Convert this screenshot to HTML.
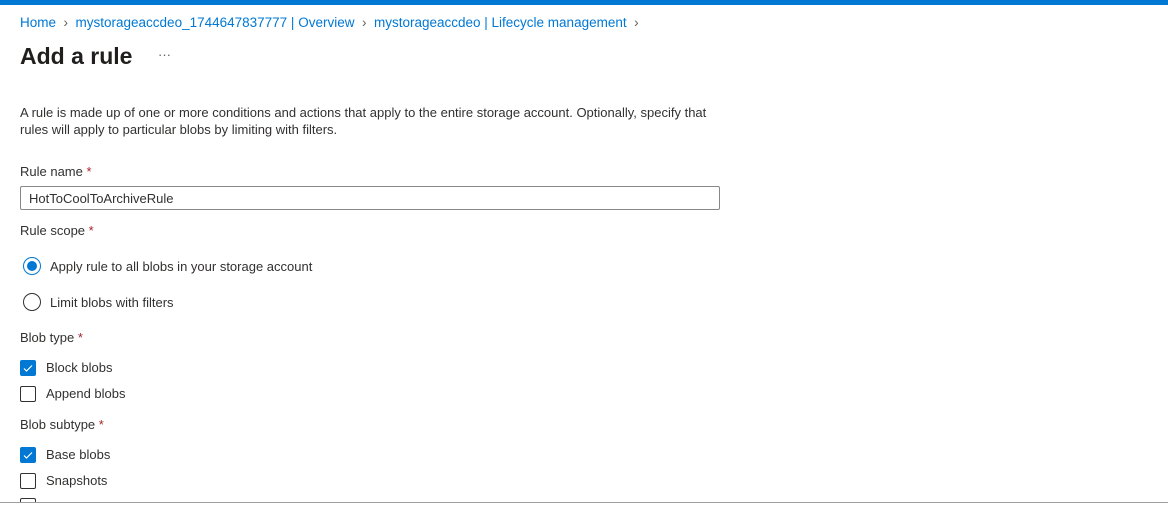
<!DOCTYPE html>
<html><head><style>
body{margin:0;width:1168px;height:522px;background:#fff;font-family:"Liberation Sans",sans-serif;color:#323130;position:relative;overflow:hidden;font-size:13px}
.a{position:absolute;white-space:nowrap}
.bc{color:#0078d4;font-size:13.5px}
.sep{color:#605e5c}
.req{color:#a4262c}
.cb{position:absolute;left:20px;width:16px;height:16px;border:1px solid #323130;border-radius:2px;box-sizing:border-box}
.cb.on{background:#0078d4;border-color:#0078d4}
.rd{position:absolute;left:23px;width:18px;height:18px;border:1px solid #323130;border-radius:50%;box-sizing:border-box}
</style></head><body>
<div class="a" style="left:0;top:0;width:1168px;height:5px;background:#0078d4"></div>
<div class="a bc" style="left:20px;top:15px">Home <span class="sep">&nbsp;›&nbsp;</span> mystorageaccdeo_1744647837777 | Overview <span class="sep">&nbsp;›&nbsp;</span> mystorageaccdeo | Lifecycle management <span class="sep">&nbsp;›</span></div>
<div class="a" style="left:20px;top:43px;font-size:23px;font-weight:bold;color:#201f1e">Add a rule</div>
<div class="a" style="left:158px;top:47px;font-size:13px;color:#605e5c">···</div>
<div class="a" style="left:20px;top:104px;line-height:17px">A rule is made up of one or more conditions and actions that apply to the entire storage account. Optionally, specify that<br>rules will apply to particular blobs by limiting with filters.</div>
<div class="a" style="left:20px;top:164px">Rule name <span class="req">*</span></div>
<div class="a" style="left:20px;top:186px;width:700px;height:24px;border:1px solid #8a8886;border-radius:2px;box-sizing:border-box;padding:4px 8px">HotToCoolToArchiveRule</div>
<div class="a" style="left:20px;top:223px">Rule scope <span class="req">*</span></div>
<div class="rd" style="top:257px;border-color:#0078d4"><div style="position:absolute;left:3px;top:3px;width:10px;height:10px;border-radius:50%;background:#0078d4"></div></div>
<div class="a" style="left:50px;top:259px">Apply rule to all blobs in your storage account</div>
<div class="rd" style="top:293px"></div>
<div class="a" style="left:50px;top:295px">Limit blobs with filters</div>
<div class="a" style="left:20px;top:330px">Blob type <span class="req">*</span></div>
<div class="cb on" style="top:360px"><svg width="16" height="16" style="position:absolute;left:-1px;top:-1px"><path d="M4 8.5l2.5 2.5L12 5.5" stroke="#fff" fill="none" stroke-width="1.2"/></svg></div>
<div class="a" style="left:46px;top:360px">Block blobs</div>
<div class="cb" style="top:386px"></div>
<div class="a" style="left:46px;top:386px">Append blobs</div>
<div class="a" style="left:20px;top:417px">Blob subtype <span class="req">*</span></div>
<div class="cb on" style="top:447px"><svg width="16" height="16" style="position:absolute;left:-1px;top:-1px"><path d="M4 8.5l2.5 2.5L12 5.5" stroke="#fff" fill="none" stroke-width="1.2"/></svg></div>
<div class="a" style="left:46px;top:447px">Base blobs</div>
<div class="cb" style="top:473px"></div>
<div class="a" style="left:46px;top:473px">Snapshots</div>
<div class="a" style="left:20px;top:498px;width:16px;height:4px;border:1px solid #323130;border-bottom:none;border-radius:2px 2px 0 0;box-sizing:border-box"></div>
<div class="a" style="left:0;top:502px;width:1168px;height:1px;background:#a19f9d"></div>
<div class="a" style="left:0;top:503px;width:1168px;height:19px;background:#fff"></div>
</body></html>
